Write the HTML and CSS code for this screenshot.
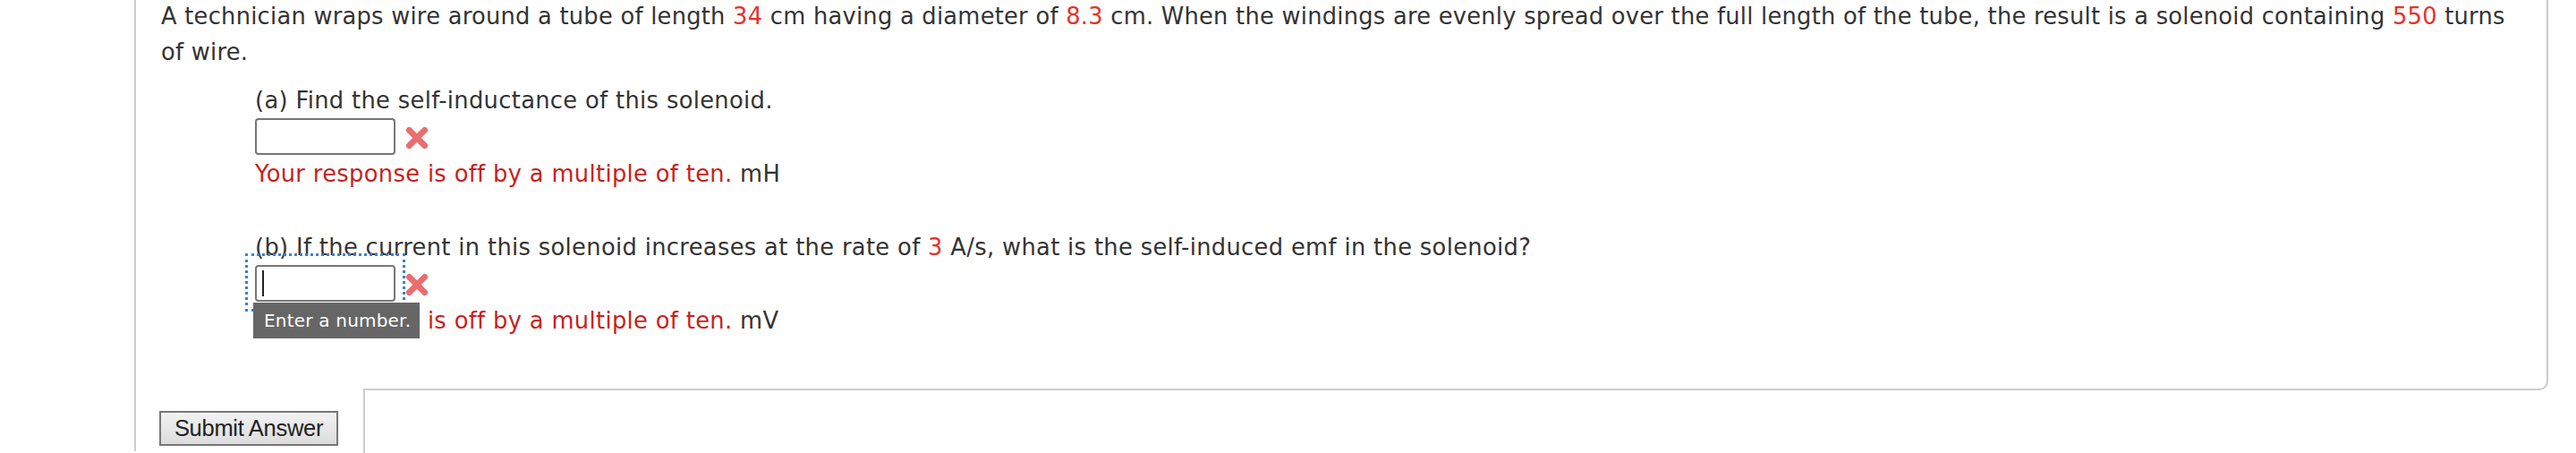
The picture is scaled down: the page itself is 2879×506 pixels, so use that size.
FILE: index.html
```html
<!DOCTYPE html>
<html lang="en">
<head>
<meta charset="utf-8">
<title>Solenoid question</title>
<link rel="stylesheet" href="styles.css">
</head>
<body>
<div class="page">
  <div class="question">
    <p class="stem">A technician wraps wire around a tube of length <span class="num">34</span> cm having a diameter of <span class="num">8.3</span> cm. When the windings are evenly spread over the full length of the tube, the result is a solenoid containing <span class="num">550</span> turns of wire.</p>
    <div class="part part-a">
      <div class="prompt">(a) Find the self-inductance of this solenoid.</div>
      <div class="answer-row">
        <span class="field"><input class="answer" type="text" aria-label="answer a"></span>
        <svg class="wrong" viewBox="0 0 26 26" width="26" height="26" aria-hidden="true"><path d="M5 5 L21 21 M21 5 L5 21"/></svg>
      </div>
      <div class="feedback"><span class="bad">Your response is off by a multiple of ten.</span> mH</div>
    </div>
    <div class="part part-b">
      <div class="prompt">(b) If the current in this solenoid increases at the rate of <span class="num">3</span> A/s, what is the self-induced emf in the solenoid?</div>
      <div class="answer-row">
        <span class="field focused"><input class="answer" type="text" aria-label="answer b"><span class="caret"></span>
          <span class="tooltip">Enter a number.</span>
        </span>
        <svg class="wrong" viewBox="0 0 26 26" width="26" height="26" aria-hidden="true"><path d="M5 5 L21 21 M21 5 L5 21"/></svg>
      </div>
      <div class="feedback"><span class="bad">Your response is off by a multiple of ten.</span> mV</div>
    </div>
  </div>
  <div class="bottom">
    <div class="actions"><button class="submit" type="button">Submit Answer</button></div>
    <div class="next"></div>
  </div>
</div>
</body>
</html>
```
FILE: styles.css
```css
html, body {
  margin: 0;
  padding: 0;
  background: #fff;
}
body {
  height: 506px;
  overflow: hidden;
}
.page {
  margin-left: 150px;
  margin-right: 31px;
  border-left: 2px solid #cccccc;
  height: 506px;
  font-family: "DejaVu Sans", Verdana, sans-serif;
  font-size: 25.7px;
  letter-spacing: 0.36px;
  color: #333333;
}
.question {
  position: relative;
  padding: 0 30px 58px 28px;
}
.question::after {
  content: "";
  position: absolute;
  left: 254px;
  right: 0;
  top: -20px;
  bottom: 0;
  border-right: 2px solid #cccccc;
  border-bottom: 2px solid #cccccc;
  border-bottom-right-radius: 10px;
  pointer-events: none;
}
.stem {
  margin: -2px 0 0;
  line-height: 40.4px;
  letter-spacing: 0.27px;
}
.num {
  color: #e8322b;
}
.part {
  margin-left: 105px;
}
.part-a {
  margin-top: 13px;
}
.part-b {
  margin-top: 42px;
}
.prompt, .feedback {
  line-height: 40px;
}
.feedback {
  margin-top: 1px;
}
.bad {
  color: #c91f1c;
}
.answer-row {
  display: flex;
  align-items: center;
  gap: 10px;
  height: 41px;
}
.field {
  position: relative;
  display: block;
  width: 157px;
  height: 41px;
}
.answer {
  box-sizing: border-box;
  display: block;
  width: 157px;
  height: 41px;
  margin: 0;
  padding: 0 8px;
  border: 2px solid #777777;
  border-radius: 4px;
  background: #fff;
  font: inherit;
  outline: none;
}
.focused::before {
  content: "";
  position: absolute;
  left: -11px;
  top: -13px;
  right: -11px;
  bottom: -11px;
  border: 3px dotted #3a7fdc;
  pointer-events: none;
}
.caret {
  position: absolute;
  left: 8px;
  top: 6px;
  width: 2px;
  height: 29px;
  background: #222;
}
.tooltip {
  position: absolute;
  left: -2px;
  top: 42px;
  width: 186px;
  height: 40px;
  box-sizing: border-box;
  padding-left: 12px;
  background: #666666;
  color: #ffffff;
  font-size: 20px;
  letter-spacing: 0.2px;
  line-height: 40px;
  white-space: nowrap;
  z-index: 2;
}
.wrong {
  display: block;
  margin-top: 3px;
  width: 28px;
  height: 28px;
}
.wrong path {
  stroke: #e55556;
  stroke-width: 6.5;
  stroke-linecap: round;
  fill: none;
  opacity: 0.85;
}
.bottom {
  display: flex;
  height: 72px;
}
.actions {
  width: 254px;
  flex: none;
}
.submit {
  margin: 23px 0 0 26px;
  width: 200px;
  height: 39px;
  padding: 0;
  border: 2px solid #777777;
  border-radius: 0;
  background: linear-gradient(#f2f2f2, #dcdcdc);
  color: #222;
  font-family: "Liberation Sans", Arial, sans-serif;
  font-size: 25.5px;
  letter-spacing: -0.3px;
}
.next {
  flex: 1;
  border-left: 2px solid #cccccc;
}
```
